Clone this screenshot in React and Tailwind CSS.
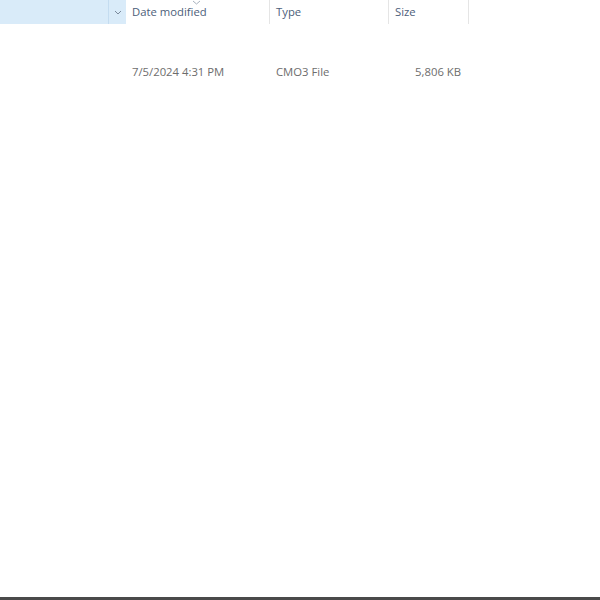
import React from "react";

const font = { fontFamily: '"Segoe UI", "Open Sans", "Noto Sans", sans-serif' };

function HeadCell({ w, children, className = "" }) {
  return (
    <div
      className={`flex h-[24px] items-center border-r border-[#e5e5e5] pl-[6px] pt-[1px] text-[11.3px] text-[#4c607a] ${className}`}
      style={{ width: w }}
    >
      {children}
    </div>
  );
}

export default function App() {
  return (
    <div className="flex h-[600px] w-[600px] flex-col bg-white" style={font}>
      <div className="flex h-[24px]">
        <div className="flex h-[24px] w-[126px] bg-[#d9ebf9]">
          <div className="w-[109px] border-r border-[#c4dcf0]" />
          <div className="flex w-[17px] items-center justify-center">
            <svg width="8" height="5" viewBox="0 0 8 5" fill="none" stroke="#7b8a9c" strokeWidth="1">
              <path d="M1 1l3 3 3-3" />
            </svg>
          </div>
        </div>
        <HeadCell w={144} className="relative">
          Date modified
          <svg className="absolute left-[66px] top-0" width="9" height="5" viewBox="0 0 9 5" fill="none" stroke="#a8b2be" strokeWidth="1">
            <path d="M1 1l3.5 3 3.5-3" />
          </svg>
        </HeadCell>
        <HeadCell w={119}>Type</HeadCell>
        <HeadCell w={80}>Size</HeadCell>
      </div>
      <div className="mt-[37px] flex h-[22px] items-center text-[11.3px] text-[#6d6d6d]">
        <div className="w-[132px]" />
        <div className="w-[144px]">7/5/2024 4:31 PM</div>
        <div className="w-[119px]">CMO3 File</div>
        <div className="w-[66px] text-right">5,806 KB</div>
      </div>
      <div className="flex-1" />
      <div className="h-[3px] bg-[#4a4a4a]" />
    </div>
  );
}
